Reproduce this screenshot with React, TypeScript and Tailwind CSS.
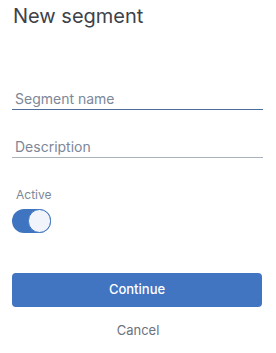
import React, { useState } from 'react';

export default function App() {
  const [active, setActive] = useState(true);

  return (
    <div className="w-[276px] h-[353px] bg-white px-[12px] font-['Inter',sans-serif]">
      <h1 className="pt-[4px] pl-[1px] text-[20px] leading-[24px] font-normal text-[#3d4249]">New segment</h1>

      {/* Fields */}
      <div className="mt-[61px] flex flex-col pr-[1px]">
        <div className="border-b border-[#4a6f9c]">
          <input
            placeholder="Segment name"
            className="block w-full h-[20px] px-[3px] text-[14px] leading-[20px] text-[#374151] placeholder:text-[#7d8798] outline-none bg-transparent"
          />
        </div>
        <div className="mt-[27px] border-b border-[#aab2bd]">
          <input
            placeholder="Description"
            className="block w-full h-[20px] px-[3px] text-[14px] leading-[20px] text-[#374151] placeholder:text-[#7d8798] outline-none bg-transparent"
          />
        </div>
      </div>

      {/* Active toggle */}
      <div className="mt-[29px] pl-[4px] text-[12px] leading-[16px] text-[#7d8798]">Active</div>
      <button
        onClick={() => setActive(!active)}
        className={`mt-[6px] flex items-center w-[39px] h-[24px] rounded-full ${
          active ? 'bg-[#3f74c0] justify-end' : 'bg-[#c8ced6] justify-start'
        }`}
      >
        <span className="block w-[23px] h-[24px] rounded-full bg-[#f1f5fb] border-[1.5px] border-[#3f74c0]" />
      </button>

      {/* Actions */}
      <button className="block mt-[40px] w-[250px] h-[34px] rounded-[4px] bg-[#4175c2] text-white text-[13px] font-medium">
        Continue
      </button>
      <div className="mt-[15px] text-center text-[13px] leading-[17px] text-[#6b7280]">Cancel</div>
    </div>
  );
}
